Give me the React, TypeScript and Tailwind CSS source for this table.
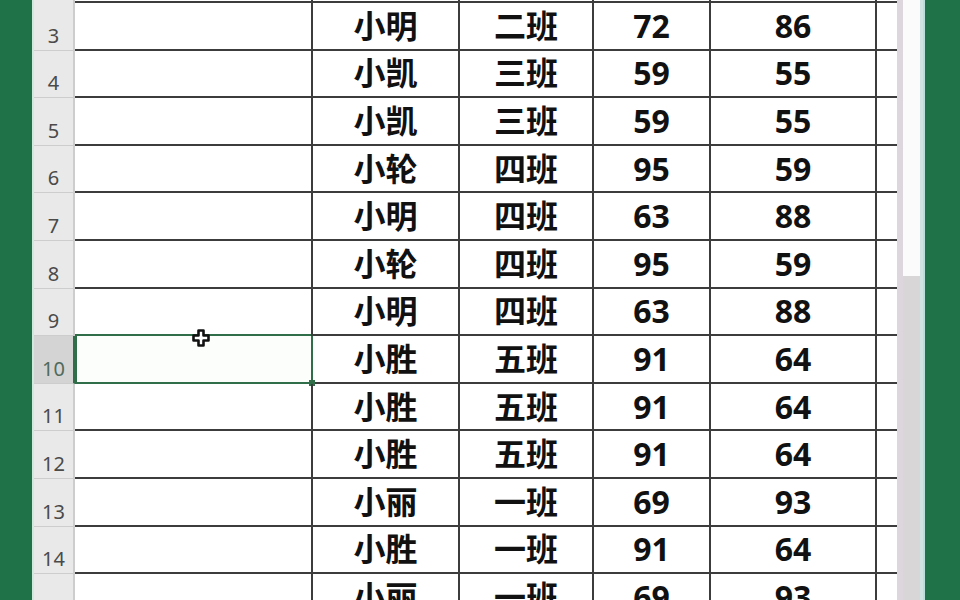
const FONT = { fontFamily: '"Noto Sans", "Noto Sans CJK SC", sans-serif' };

type Row = { n: number; name: string; cls: string; a: string; b: string };

const rows: Row[] = [
  { n: 3, name: "小明", cls: "二班", a: "72", b: "86" },
  { n: 4, name: "小凯", cls: "三班", a: "59", b: "55" },
  { n: 5, name: "小凯", cls: "三班", a: "59", b: "55" },
  { n: 6, name: "小轮", cls: "四班", a: "95", b: "59" },
  { n: 7, name: "小明", cls: "四班", a: "63", b: "88" },
  { n: 8, name: "小轮", cls: "四班", a: "95", b: "59" },
  { n: 9, name: "小明", cls: "四班", a: "63", b: "88" },
  { n: 10, name: "小胜", cls: "五班", a: "91", b: "64" },
  { n: 11, name: "小胜", cls: "五班", a: "91", b: "64" },
  { n: 12, name: "小胜", cls: "五班", a: "91", b: "64" },
  { n: 13, name: "小丽", cls: "一班", a: "69", b: "93" },
  { n: 14, name: "小胜", cls: "一班", a: "91", b: "64" },
  { n: 15, name: "小丽", cls: "一班", a: "69", b: "93" },
];

const SELECTED = 10;

// move cursor: white plus with a dark outline
function MoveCursor() {
  return (
    <svg width="18" height="18" viewBox="0 0 18 18" className="absolute left-[117px] top-[-7px]">
      <path
        d="M6.5 1.5h5v5h5v5h-5v5h-5v-5h-5v-5h5z"
        fill="#fff"
        stroke="#111"
        strokeWidth="2.6"
        strokeLinejoin="round"
      />
    </svg>
  );
}

function Cell({ w, children }: { w: string; children?: React.ReactNode }) {
  return (
    <div
      className={`${w} flex h-full shrink-0 items-center justify-center border-r-2 border-b-2 border-[#3c3c3c] text-[32px] leading-none font-bold text-[#111]`}
    >
      {children}
    </div>
  );
}

// the cut-off bottom edge of row 2
function TopEdge() {
  return (
    <div className="flex h-[3px] shrink-0">
      <div className="h-full w-[41px] shrink-0 border-r-2 border-[#c9c9c9] bg-[#e9e9e9]" />
      <div className="h-full w-[238px] shrink-0 border-r-2 border-b-2 border-[#3c3c3c]" />
      <div className="h-full w-[147px] shrink-0 border-r-2 border-b-2 border-[#3c3c3c]" />
      <div className="h-full w-[134px] shrink-0 border-r-2 border-b-2 border-[#3c3c3c]" />
      <div className="h-full w-[117px] shrink-0 border-r-2 border-b-2 border-[#3c3c3c]" />
      <div className="h-full w-[166px] shrink-0 border-r-2 border-b-2 border-[#3c3c3c]" />
      <div className="h-full flex-1 border-b-2 border-[#3c3c3c]" />
    </div>
  );
}

function SheetRow({ row }: { row: Row }) {
  const sel = row.n === SELECTED;
  return (
    <div className="flex h-[47.6px] shrink-0">
      <div
        className={`flex h-full w-[41px] shrink-0 items-end justify-center border-r-2 border-b border-[#cdcdcd] pb-[4px] text-[20px] leading-none ${
          sel ? "bg-[#d4d4d4] text-[#506a5a] border-r-[#2f6e48]" : "bg-[#e9e9e9] text-[#4a4a4a]"
        }`}
      >
        {row.n}
      </div>
      <div
        className={`relative h-full w-[238px] shrink-0 border-r-2 border-b-2 ${
          sel ? "border-[#2f6e48] bg-[#fcfefc]" : "border-[#3c3c3c]"
        }`}
      >
        {sel && (
          <>
            <div className="absolute inset-x-0 top-[-2px] h-[2px] bg-[#2f6e48]" />
            <div className="absolute left-0 top-0 h-full w-[2px] bg-[#2f6e48]" />
            <div className="absolute bottom-[-4px] right-[-4px] h-[6px] w-[6px] bg-[#2f6e48]" />
            <MoveCursor />
          </>
        )}
      </div>
      <Cell w="w-[147px]">{row.name}</Cell>
      <Cell w="w-[134px]">{row.cls}</Cell>
      <Cell w="w-[117px]">{row.a}</Cell>
      <Cell w="w-[166px]">{row.b}</Cell>
      <div className="h-full flex-1 border-b-2 border-[#3c3c3c]" />
    </div>
  );
}

export default function App() {
  return (
    <div className="flex h-[600px] w-[960px] overflow-hidden bg-white" style={FONT}>
      <div className="w-[32px] shrink-0 bg-[#1f7147]" />
      <div className="w-[2px] shrink-0 bg-[#cfe9dc]" />
      <div className="flex w-[863px] shrink-0 flex-col">
        <TopEdge />
        {rows.map((r) => (
          <SheetRow key={r.n} row={r} />
        ))}
      </div>
      <div className="flex w-[26px] shrink-0 border-l-[6px] border-[#ddd6dc] bg-[#e6e2e6]">
        <div className="flex flex-1 flex-col">
          <div className="h-[276px] bg-[#fcfbfc]" />
          <div className="flex-1 bg-[#d8d6d6]" />
        </div>
        <div className="w-[3px] bg-[#cfe3e2]" />
      </div>
      <div className="w-[2px] shrink-0 bg-[#b7e0da]" />
      <div className="flex-1 bg-[#1f7147]" />
    </div>
  );
}
